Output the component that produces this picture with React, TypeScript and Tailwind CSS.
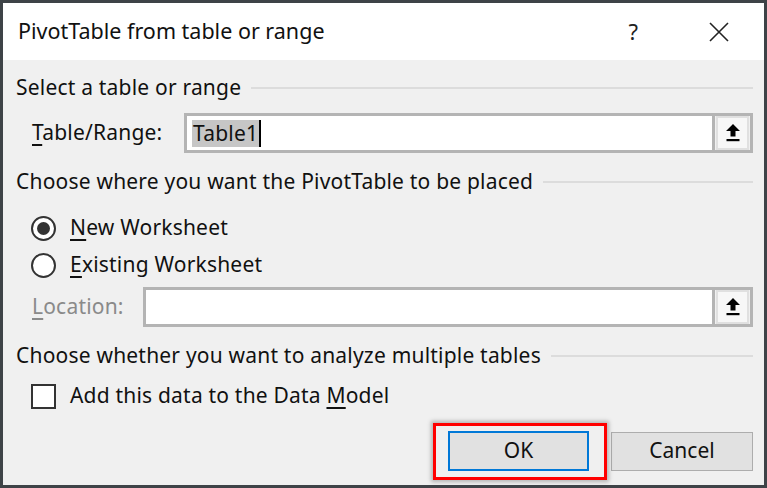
import React from 'react';

const font = { fontFamily: '"Segoe UI", "Noto Sans", "Open Sans", sans-serif' };

function UploadIcon() {
  return (
    <svg width="16" height="20" viewBox="0 0 16 20" fill="#000">
      <path d="M8 1 L15 8 L10.5 8 L10.5 13.5 L5.5 13.5 L5.5 8 L1 8 Z" />
      <rect x="1.5" y="16" width="13" height="2.2" />
    </svg>
  );
}

function RangeInput({ value, selected }: { value?: string; selected?: boolean }) {
  return (
    <div className="flex flex-1 h-full border-[3px] border-[#b4b4b4] bg-white">
      <div className="flex flex-1 items-center pl-[5px] text-[21px] tracking-[0.2px] text-[#111]">
        {selected && value && (
          <>
            <span className="bg-[#c6c6c6] leading-[27px] px-[1px]">{value}</span>
            <span className="w-[2px] h-[27px] bg-black" />
          </>
        )}
      </div>
      <div className="flex w-[38px] items-center justify-center border-l-[3px] border-[#b4b4b4] bg-[#f0f0f0]">
        <div className="flex w-[33px] h-full items-center justify-center border-[2px] border-[#e0e0e0] bg-[#f7f7f7]">
          <UploadIcon />
        </div>
      </div>
    </div>
  );
}

function Heading({ text }: { text: string }) {
  return (
    <div className="flex items-center h-[28px] gap-[10px]">
      <span className="text-[21px] tracking-[0.2px] text-[#111] whitespace-nowrap">{text}</span>
      <div className="flex-1 h-[2px] bg-[#dcdcdc]" />
    </div>
  );
}

function Radio({ checked, key1, rest }: { checked?: boolean; key1: string; rest: string }) {
  return (
    <div className="flex items-center h-[30px] pl-[15px] gap-[14px]">
      <div className="flex w-[25px] h-[25px] items-center justify-center rounded-full border-[2px] border-[#333] bg-white">
        {checked && <div className="w-[13px] h-[13px] rounded-full bg-[#333]" />}
      </div>
      <span className="text-[21px] tracking-[0.2px] text-[#111]">
        <span className="underline underline-offset-[4px]">{key1}</span>
        {rest}
      </span>
    </div>
  );
}

export default function App() {
  return (
    <div className="w-[767px] h-[488px] flex flex-col border-[3px] border-[#3e4347] bg-[#f0f0f0]" style={font}>
      {/* Title bar */}
      <div className="flex items-center h-[57px] bg-white pl-[15px] pr-[34px]">
        <span className="text-[21.5px] text-[#111] flex-1">PivotTable from table or range</span>
        <span className="text-[22px] text-[#222] mr-[70px]">?</span>
        <svg width="22" height="22" viewBox="0 0 22 22" stroke="#222" strokeWidth="1.6">
          <path d="M2 2 L20 20 M20 2 L2 20" />
        </svg>
      </div>

      {/* Body */}
      <div className="flex flex-col flex-1 pl-[13px] pr-[11px]">
        <div className="mt-[14px]">
          <Heading text="Select a table or range" />
        </div>

        <div className="flex items-center h-[40px] mt-[11px] pl-[16px]">
          <span className="w-[152px] text-[21px] tracking-[0.2px] text-[#111]">
            <span className="underline underline-offset-[4px]">T</span>able/Range:
          </span>
          <RangeInput value="Table1" selected />
        </div>

        <div className="mt-[15px]">
          <Heading text="Choose where you want the PivotTable to be placed" />
        </div>

        <div className="mt-[17px]">
          <Radio checked key1="N" rest="ew Worksheet" />
        </div>
        <div className="mt-[7px]">
          <Radio key1="E" rest="xisting Worksheet" />
        </div>

        <div className="flex items-center h-[40px] mt-[7px] pl-[16px]">
          <span className="w-[111px] text-[21px] tracking-[0.2px] text-[#8a8a8a]">
            <span className="underline underline-offset-[4px]">L</span>ocation:
          </span>
          <RangeInput />
        </div>

        <div className="mt-[15px]">
          <Heading text="Choose whether you want to analyze multiple tables" />
        </div>

        <div className="flex items-center h-[30px] mt-[11px] pl-[15px] gap-[14px]">
          <div className="w-[25px] h-[25px] border-[2px] border-[#333] bg-white" />
          <span className="text-[21px] tracking-[0.2px] text-[#111]">
            Add this data to the Data <span className="underline underline-offset-[4px]">M</span>odel
          </span>
        </div>

        <div className="flex justify-end items-center gap-[22px] mt-[20px]">
          <div className="relative">
            <button className="w-[141px] h-[40px] border-[2px] border-[#0078d7] bg-[#e1e1e1] text-[21px] text-[#111]">
              OK
            </button>
            <div className="absolute left-[-15px] top-[-8px] w-[174px] h-[57px] border-[3px] border-[#ff0000] shadow-[0_0_4px_2px_rgba(0,0,0,0.25)]" />
          </div>
          <button className="w-[142px] h-[39px] border-[1px] border-[#adadad] bg-[#e1e1e1] text-[21px] text-[#111]">
            Cancel
          </button>
        </div>
      </div>
    </div>
  );
}
